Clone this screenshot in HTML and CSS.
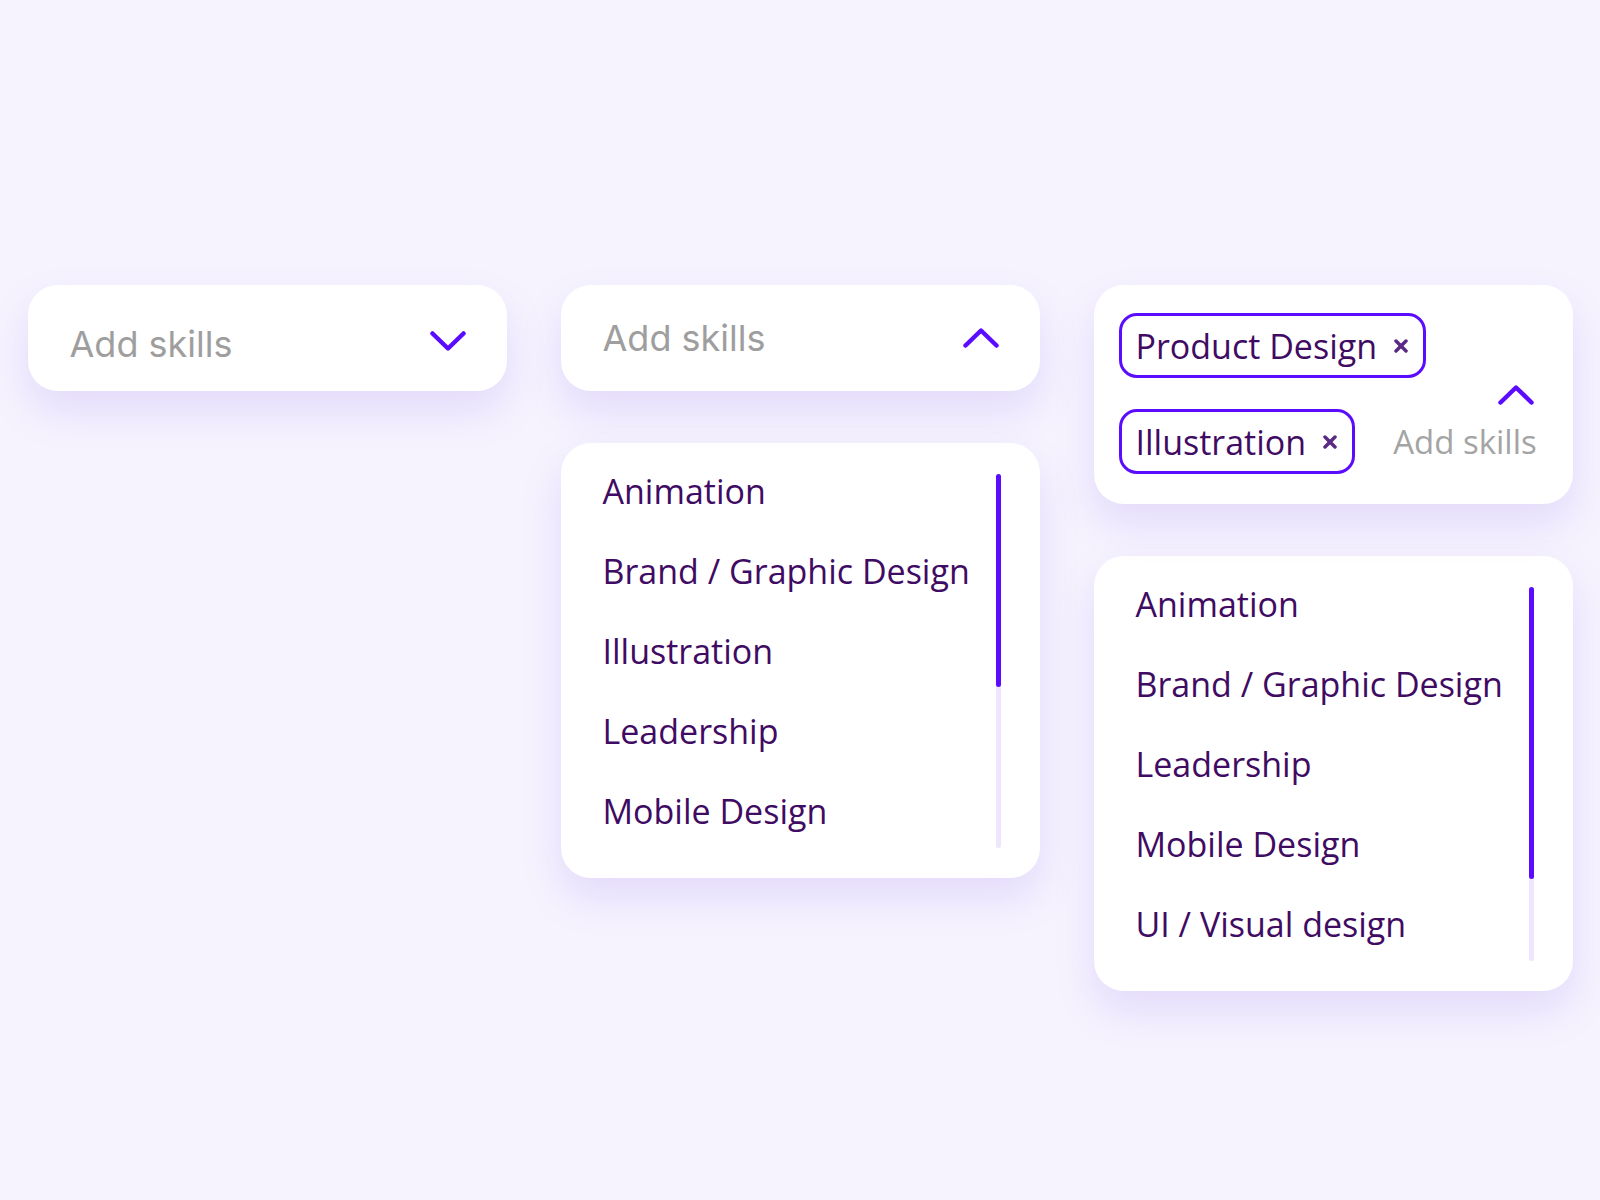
FILE: index.html
```html
<!DOCTYPE html>
<html lang="en">
<head>
    <meta charset="UTF-8">
    <meta name="viewport" content="width=device-width, initial-scale=1.0">
    <title>Add skills</title>
    <link rel="stylesheet" href="styles.css">
</head>
<body>

    <div class="board">

        <!-- closed -->
        <div class="column">
            <div class="field field-closed">
                <span class="placeholder">Add skills</span>
                <svg class="caret" width="36" height="20" viewBox="0 0 36 20">
                    <polyline points="2.5,2.5 18,17.5 33.5,2.5" />
                </svg>
            </div>
        </div>

        <!-- open, empty -->
        <div class="column">
            <div class="field">
                <span class="placeholder">Add skills</span>
                <svg class="caret" width="36" height="20" viewBox="0 0 36 20">
                    <polyline points="2.5,17.5 18,2.5 33.5,17.5" />
                </svg>
            </div>

            <div class="menu">
                <ul class="options">
                    <li>Animation</li>
                    <li>Brand / Graphic Design</li>
                    <li>Illustration</li>
                    <li>Leadership</li>
                    <li>Mobile Design</li>
                </ul>
                <div class="scroll-track">
                    <div class="scroll-thumb" style="height: 57%"></div>
                </div>
            </div>
        </div>

        <!-- open, with tags -->
        <div class="column">
            <div class="field field-tags">
                <div class="tags">
                    <span class="tag">Product Design
                        <svg class="tag-remove" width="14" height="14" viewBox="0 0 14 14">
                            <line x1="2" y1="2" x2="12" y2="12" />
                            <line x1="12" y1="2" x2="2" y2="12" />
                        </svg>
                    </span>
                    <span class="tag">Illustration
                        <svg class="tag-remove" width="14" height="14" viewBox="0 0 14 14">
                            <line x1="2" y1="2" x2="12" y2="12" />
                            <line x1="12" y1="2" x2="2" y2="12" />
                        </svg>
                    </span>
                    <span class="tag-input">Add skills</span>
                </div>
                <svg class="caret caret-float" width="36" height="20" viewBox="0 0 36 20">
                    <polyline points="2.5,17.5 18,2.5 33.5,17.5" />
                </svg>
            </div>

            <div class="menu">
                <ul class="options">
                    <li>Animation</li>
                    <li>Brand / Graphic Design</li>
                    <li>Leadership</li>
                    <li>Mobile Design</li>
                    <li>UI / Visual design</li>
                </ul>
                <div class="scroll-track">
                    <div class="scroll-thumb" style="height: 78%"></div>
                </div>
            </div>
        </div>

    </div>

</body>
</html>
```

FILE: styles.css
```css
html {
    background-color: #f6f3fe;
}

body {
    background-color: #f6f3fe;
    margin: 0;
    min-height: 100vh;
    font-family: 'Open Sans', 'Liberation Sans', sans-serif;
    color: #3f0b63;
}

.board {
    display: flex;
    justify-content: center;
    align-items: flex-start;
    gap: 54px;
    padding: 285px 0 120px;
}

.column {
    width: 479px;
    display: flex;
    flex-direction: column;
    gap: 52px;
}

.field {
    position: relative;
    box-sizing: border-box;
    height: 106px;
    padding: 0 41px 0 42px;
    background-color: #ffffff;
    border-radius: 30px;
    box-shadow: 0 20px 40px rgba(120, 80, 235, 0.15);
    display: flex;
    align-items: center;
    justify-content: space-between;
}

.field-closed {
    padding-top: 6px;
}

.field-closed .placeholder {
    margin-top: 6px;
}

.placeholder {
    font-family: 'Inter', 'Liberation Sans', sans-serif;
    font-size: 36px;
    color: #9e9e9e;
}

.caret {
    display: block;
    flex-shrink: 0;
}

.caret polyline {
    fill: none;
    stroke: #5b0cff;
    stroke-width: 4.5;
    stroke-linecap: round;
    stroke-linejoin: round;
}

.caret-float {
    position: absolute;
    right: 39px;
    top: 50%;
    transform: translateY(-50%);
}

/* field with selected tags */
.field-tags {
    height: auto;
    padding: 28px 25px 30px 25px;
}

.tags {
    display: flex;
    flex-wrap: wrap;
    align-items: center;
    column-gap: 38px;
    row-gap: 31px;
}

.tag {
    box-sizing: border-box;
    height: 65px;
    padding: 0 15px 0 14px;
    border: 3px solid #5b0cff;
    border-radius: 18px;
    display: inline-flex;
    align-items: center;
    gap: 17px;
    font-size: 34px;
    color: #3f0b63;
}

.tag-remove line {
    stroke: #5a2b84;
    stroke-width: 3.5;
    stroke-linecap: round;
}

.tag-input {
    font-size: 33px;
    color: #a4a4a4;
}

/* dropdown list */
.menu {
    display: flex;
    padding: 8px 39px 27px 42px;
    background-color: #ffffff;
    border-radius: 30px;
    box-shadow: 0 20px 40px rgba(120, 80, 235, 0.15);
}

.options {
    flex: 1;
    list-style: none;
    margin: 0;
    padding: 0;
}

.options li {
    font-size: 34px;
    line-height: 80px;
    white-space: nowrap;
}

.scroll-track {
    width: 5px;
    margin: 23px 0 3px;
    background-color: #ede6fc;
    border-radius: 3px;
}

.scroll-thumb {
    background-color: #5b0cff;
    border-radius: 3px;
}
```
